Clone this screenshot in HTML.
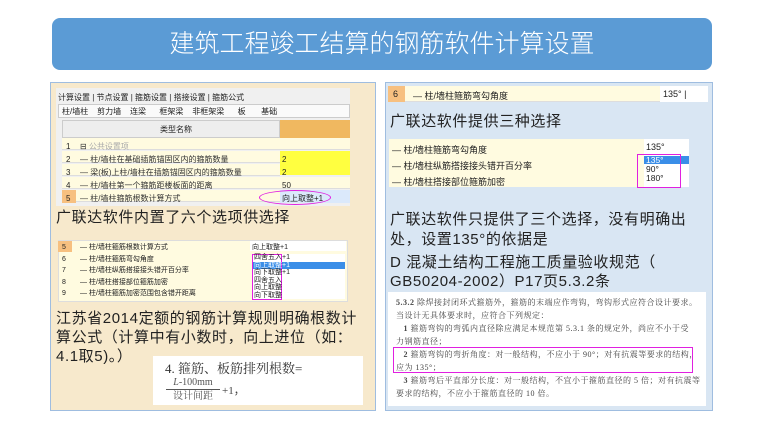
<!DOCTYPE html>
<html><head><meta charset="utf-8"><style>
*{margin:0;padding:0;box-sizing:border-box}
body{width:760px;height:422px;background:#fff;position:relative;overflow:hidden;font-family:"Liberation Sans","Noto Sans CJK SC",sans-serif}
.a{position:absolute}
.title{left:52px;top:18px;width:660px;height:52px;background:#5b9bd5;border-radius:8px;color:#fff;font-size:25px;text-align:center;line-height:52px;font-weight:300}
.lp{left:50px;top:82px;width:326px;height:329px;background:#f7e9cc;border:1px solid #9fbde0}
.rp{left:385px;top:82px;width:328px;height:329px;background:#d9e6f3;border:1px solid #9fbde0}
.t{font-size:15px;color:#222;white-space:nowrap;letter-spacing:0.6px}
.sm{font-size:8px;color:#222;white-space:nowrap}
.row{position:absolute;height:12px;border-bottom:1px solid #ddd;background:#fffbe0}
</style></head><body>
<div class="a title">建筑工程竣工结算的钢筋软件计算设置</div>
<div class="a lp"></div>
<div class="a rp"></div>

<div class="a" style="left:56px;top:88px;width:294px;height:118px;background:#f0f0f0;"></div>
<div class="a sm" style="left:58px;top:92px">计算设置 | 节点设置 | 箍筋设置 | 搭接设置 | 箍筋公式</div>
<div class="a" style="left:58px;top:104px;width:292px;height:14px;background:#fafafa;border:1px solid #ccc"></div>
<div class="a sm" style="left:62px;top:106px">柱/墙柱&nbsp;&nbsp;&nbsp;&nbsp;剪力墙&nbsp;&nbsp;&nbsp;&nbsp;连梁&nbsp;&nbsp;&nbsp;&nbsp;&nbsp;&nbsp;框架梁&nbsp;&nbsp;&nbsp;&nbsp;非框架梁&nbsp;&nbsp;&nbsp;&nbsp;&nbsp;&nbsp;板&nbsp;&nbsp;&nbsp;&nbsp;&nbsp;&nbsp;&nbsp;基础</div>
<div class="a" style="left:62px;top:120px;width:218px;height:18px;background:#eee;border:1px solid #ccc"></div>
<div class="a" style="left:280px;top:120px;width:70px;height:18px;background:#f0b860"></div>
<div class="a sm" style="left:160px;top:124px">类型名称</div>
<div class="row" style="left:62px;top:138px;width:288px"></div>
<div class="row" style="left:62px;top:151px;width:288px"></div>
<div class="a" style="left:280px;top:151px;width:70px;height:24px;background:#ffff40"></div>
<div class="row" style="left:62px;top:164px;width:218px"></div>
<div class="row" style="left:62px;top:177px;width:288px"></div>
<div class="row" style="left:62px;top:190px;width:218px"></div>
<div class="a" style="left:280px;top:190px;width:70px;height:13px;background:#dbe9fb"></div>
<div class="a" style="left:62px;top:190px;width:14px;height:13px;background:#f7c080"></div>
<div class="a sm" style="left:66px;top:140px;line-height:13px">1<br>2<br>3<br>4<br>5</div>
<div class="a sm" style="left:80px;top:140px;line-height:13px;color:#333">⊟ <span style="color:#aaa">公共设置项</span><br>— 柱/墙柱在基础插筋锚固区内的箍筋数量<br>— 梁(板)上柱/墙柱在插筋锚固区内的箍筋数量<br>— 柱/墙柱第一个箍筋距楼板面的距离<br>— 柱/墙柱箍筋根数计算方式</div>
<div class="a sm" style="left:282px;top:153px;line-height:13px">2<br>2<br>50<br>向上取整+1</div>
<div class="a" style="left:259px;top:190px;width:72px;height:15px;border:1.5px solid #e020e0;border-radius:50%"></div>
<div class="a t" style="left:56px;top:206px">广联达软件内置了六个选项供选择</div>

<div class="a" style="left:58px;top:240px;width:290px;height:62px;background:#fffbe0;border:1px solid #ddd"></div>
<div class="a" style="left:58px;top:241px;width:14px;height:11px;background:#f7c080"></div>
<div class="a" style="left:250px;top:241px;width:96px;height:10px;background:#fff"></div>
<div class="a sm" style="left:62px;top:242px;line-height:11.5px;font-size:7px">5<br>6<br>7<br>8<br>9</div>
<div class="a sm" style="left:80px;top:242px;line-height:11.5px;font-size:7px">— 柱/墙柱箍筋根数计算方式<br>— 柱/墙柱箍筋弯勾角度<br>— 柱/墙柱纵筋搭接接头错开百分率<br>— 柱/墙柱搭接部位箍筋加密<br>— 柱/墙柱箍筋加密范围包含错开距离</div>
<div class="a sm" style="left:252px;top:242px;font-size:7px">向上取整+1</div>
<div class="a" style="left:252px;top:254px;width:93px;height:45px;background:#fff"></div>
<div class="a" style="left:252px;top:262px;width:93px;height:7px;background:#3a8ee8"></div>
<div class="a" style="left:252px;top:254px;width:30px;height:46px;border:1.5px solid #e020e0"></div>
<div class="a sm" style="left:254px;top:254px;font-size:7px;line-height:7.5px">四舍五入+1<br><span style="color:#fff">向上取整+1</span><br>向下取整+1<br>四舍五入<br>向上取整<br>向下取整</div>
<div class="a t" style="left:56px;top:309px;line-height:19px">江苏省2014定额的钢筋计算规则明确根数计<br>算公式（计算中有小数时，向上进位（如：<br>4.1取5)。）</div>
<div class="a" style="left:153px;top:356px;width:210px;height:49px;background:#fff"></div>
<div class="a" style="left:165px;top:358px;font-size:13px;color:#333;font-family:'Liberation Serif','Noto Serif CJK SC',serif">4. 箍筋、板筋排列根数=</div>
<div class="a" style="left:166px;top:376px;font-size:10px;color:#555;font-family:'Liberation Serif','Noto Serif CJK SC',serif;text-align:center;line-height:13px;width:54px"><div style="border-bottom:1px solid #555"><i>L</i>-100mm</div>设计间距</div>
<div class="a" style="left:222px;top:382px;font-size:11px;color:#444;font-family:'Liberation Serif',serif">+1，</div>

<div class="a" style="left:388px;top:86px;width:320px;height:16px;background:#fffbe0;border-bottom:1px solid #ddd"></div>
<div class="a" style="left:388px;top:86px;width:17px;height:16px;background:#f7c080"></div>
<div class="a" style="left:660px;top:86px;width:48px;height:16px;background:#fff"></div>
<div class="a sm" style="left:393px;top:89px;font-size:9px">6</div>
<div class="a sm" style="left:413px;top:89px;font-size:9px">— 柱/墙柱箍筋弯勾角度</div>
<div class="a sm" style="left:663px;top:89px;font-size:9px">135° |</div>
<div class="a t" style="left:390px;top:110px">广联达软件提供三种选择</div>
<div class="a" style="left:389px;top:139px;width:300px;height:48px;background:#fffbe0"></div>
<div class="a" style="left:644px;top:139px;width:45px;height:48px;background:#fff"></div>
<div class="a" style="left:644px;top:156px;width:45px;height:8px;background:#3a8ee8"></div>
<div class="a sm" style="left:392px;top:142px;font-size:9px;line-height:16px">— 柱/墙柱箍筋弯勾角度<br>— 柱/墙柱纵筋搭接接头错开百分率<br>— 柱/墙柱搭接部位箍筋加密</div>
<div class="a sm" style="left:646px;top:142px;font-size:9px">135°</div>
<div class="a sm" style="left:646px;top:156px;font-size:8.5px;line-height:9px"><span style="color:#fff">135°</span><br>90°<br>180°</div>
<div class="a" style="left:637px;top:154px;width:44px;height:34px;border:1.5px solid #e020e0"></div>
<div class="a t" style="left:390px;top:210px;line-height:20px">广联达软件只提供了三个选择，没有明确出<br>处，设置135°的依据是</div>
<div class="a t" style="left:390px;top:253px;line-height:19px">D 混凝土结构工程施工质量验收规范（<br>GB50204-2002）P17页5.3.2条</div>
<div class="a" style="left:388px;top:292px;width:318px;height:114px;background:#fff"></div>
<div class="a" style="left:396px;top:296px;font-size:8px;line-height:13px;color:#444;white-space:nowrap;letter-spacing:0.5px;font-family:'Liberation Serif','Noto Serif CJK SC',serif">
<b>5.3.2</b> 除焊接封闭环式箍筋外，箍筋的末端应作弯钩，弯钩形式应符合设计要求。<br>当设计无具体要求时，应符合下列规定：<br>&nbsp;&nbsp;&nbsp;<b>1</b> 箍筋弯钩的弯弧内直径除应满足本规范第 5.3.1 条的规定外，尚应不小于受<br>力钢筋直径；<br>&nbsp;&nbsp;&nbsp;<b>2</b> 箍筋弯钩的弯折角度：对一般结构，不应小于 90°；对有抗震等要求的结构，<br>应为 135°；<br>&nbsp;&nbsp;&nbsp;<b>3</b> 箍筋弯后平直部分长度：对一般结构，不宜小于箍筋直径的 5 倍；对有抗震等<br>要求的结构，不应小于箍筋直径的 10 倍。</div>
<div class="a" style="left:393px;top:347px;width:300px;height:26px;border:1.5px solid #e020e0"></div>
</body></html>
